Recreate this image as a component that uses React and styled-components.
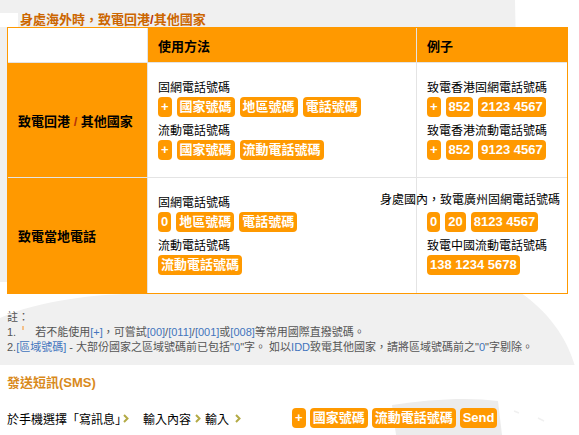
import React from 'react';
import styled, {createGlobalStyle} from 'styled-components';

const ORANGE = '#ff9900';
const GRID = '#e4e4e4';

const GlobalStyle = createGlobalStyle`
  html, body {
    margin: 0;
    padding: 0;
    background: #fff;
  }
  body {
    font-family: "Liberation Sans", "Noto Sans CJK TC", sans-serif;
    font-size: 12px;
    color: #000;
  }
`;

const Page = styled.div`
  position: relative;
  width: 579px;
  height: 435px;
  overflow: hidden;
`;

// decorative swooshes behind the page
const Backdrop = styled.svg`
  position: absolute;
  left: 0;
  top: 0;
  z-index: 0;
`;

const Content = styled.div`
  position: relative;
  z-index: 1;
  padding: 12px 0 0 7px;
`;

const Title = styled.h2`
  display: flex;
  align-items: center;
  margin: 0 0 0 -7px;
  height: 15px;
  font-size: 13px;
  line-height: 15px;
  font-weight: bold;
  color: #cc6600;
`;

const TitleMark = styled.span`
  width: 18px;
  height: 14px;
  margin-right: 2px;
  background: #fff;
`;

const Slash = styled.span`
  color: #b8330a;
`;

const Table = styled.div`
  display: grid;
  grid-template-columns: 139px 268px 150px;
  grid-template-rows: 34px 114px 115px;
  gap: 1px;
  width: max-content;
  background: ${GRID};
  border: 1px solid ${ORANGE};
`;

const Cell = styled.div`
  display: flex;
  flex-direction: column;
  justify-content: center;
  padding: 0 10px;
  background: ${p => (p.$accent ? ORANGE : '#fff')};
  font-size: ${p => (p.$strong ? '13px' : '12px')};
  font-weight: ${p => (p.$strong ? 'bold' : 'normal')};
  white-space: nowrap;
`;

const Group = styled.div`
  & + & {
    margin-top: 7px;
  }
`;

const Label = styled.div`
  line-height: 15px;
  white-space: nowrap;
  margin-left: ${p => p.$pull || 0}px;
  margin-top: ${p => (p.$lift ? -4 : 0)}px;
  margin-bottom: ${p => (p.$lift ? 4 : 0)}px;
`;

const Badges = styled.div`
  display: flex;
  gap: 5px;
  margin-top: 1px;
`;

const Badge = styled.span`
  display: inline-block;
  height: 20px;
  line-height: 20px;
  padding: 0 3px;
  border-radius: 4px;
  background: ${ORANGE};
  color: #fff;
  font-size: 13px;
  font-weight: bold;
  white-space: nowrap;
`;

const Notes = styled.div`
  margin-top: 16px;
  color: #555;
  font-size: 11px;
  line-height: 15px;
`;

const NoteLine = styled.div`
  white-space: nowrap;
`;

const Hl = styled.span`
  color: #4274bd;
`;

const Tick = styled.span`
  display: inline-block;
  width: 2px;
  height: 4px;
  margin: 0 11px 0 6px;
  background: #f4c08a;
  vertical-align: 6px;
`;

const SmsTitle = styled.h3`
  margin: 20px 0 0;
  font-size: 13px;
  line-height: 15px;
  font-weight: bold;
  color: #d98a1c;
`;

const Steps = styled.div`
  display: flex;
  align-items: center;
  height: 20px;
  margin-top: 18px;
  white-space: nowrap;
`;

const ChevronIcon = styled.svg`
  flex: none;
  margin: 0 ${p => p.$right}px 0 ${p => p.$left}px;
`;

const SmsBadges = styled.div`
  display: flex;
  gap: 4px;
  margin-left: ${p => p.$offset}px;
`;

const Chevron = ({left, right}) => (
  <ChevronIcon width="6" height="9" viewBox="0 0 6 9" $left={left} $right={right}>
    <path d="M1 1 L4.5 4.5 L1 8" fill="none" stroke="#b3aa45" strokeWidth="2" />
  </ChevronIcon>
);

const Background = () => (
  <Backdrop width="579" height="435" viewBox="0 0 579 435">
    <rect x="0" y="0" width="579" height="365" fill="#f0f0f0" />
    <path
      d="M515 0 L579 0 L579 366 L575 366 C566 336 548 312 521 293 C519 200 517 100 515 0 Z"
      fill="#fff"
    />
    <path d="M0 282 L150 282 L150 293 C95 294 40 300 0 318 Z" fill="#fff" />
    <path d="M392 405 C430 399 470 397 498 401 L502 435 L396 435 Z" fill="#ececec" />
    <path d="M514 411 L519 413 M538 418 L544 421" stroke="#f0f0f0" strokeWidth="1.5" />
  </Backdrop>
);

const rows = [
  {
    title: (
      <>
        致電回港 <Slash>/</Slash> 其他國家
      </>
    ),
    usage: [
      {label: '固網電話號碼', badges: ['+', '國家號碼', '地區號碼', '電話號碼']},
      {label: '流動電話號碼', badges: ['+', '國家號碼', '流動電話號碼']},
    ],
    examples: [
      {label: '致電香港固網電話號碼', badges: ['+', '852', '2123 4567']},
      {label: '致電香港流動電話號碼', badges: ['+', '852', '9123 4567']},
    ],
  },
  {
    title: '致電當地電話',
    usage: [
      {label: '固網電話號碼', badges: ['0', '地區號碼', '電話號碼']},
      {label: '流動電話號碼', badges: ['流動電話號碼']},
    ],
    examples: [
      {label: '身處國內，致電廣州固網電話號碼', badges: ['0', '20', '8123 4567'], pull: -47, lift: true},
      {label: '致電中國流動電話號碼', badges: ['138 1234 5678']},
    ],
  },
];

const Entries = ({items}) =>
  items.map(item => (
    <Group key={item.label}>
      <Label $pull={item.pull} $lift={item.lift}>
        {item.label}
      </Label>
      <Badges>
        {item.badges.map(b => (
          <Badge key={b}>{b}</Badge>
        ))}
      </Badges>
    </Group>
  ));

const App = () => (
  <Page>
    <GlobalStyle />
    <Background />
    <Content>
      <Title>
        <TitleMark />
        <span>
          身處海外時，致電回港<Slash>/</Slash>其他國家
        </span>
      </Title>

      <Table>
        <Cell />
        <Cell $accent $strong>使用方法</Cell>
        <Cell $accent $strong>例子</Cell>
        {rows.map((row, i) => (
          <React.Fragment key={i}>
            <Cell $accent $strong>
              <div>{row.title}</div>
            </Cell>
            <Cell>
              <Entries items={row.usage} />
            </Cell>
            <Cell>
              <Entries items={row.examples} />
            </Cell>
          </React.Fragment>
        ))}
      </Table>

      <Notes>
        <NoteLine>註：</NoteLine>
        <NoteLine>
          1.<Tick />
          若不能使用<Hl>[+]</Hl>，可嘗試<Hl>[00]</Hl>/<Hl>[011]</Hl>/<Hl>[001]</Hl>或
          <Hl>[008]</Hl>等常用國際直撥號碼。
        </NoteLine>
        <NoteLine>
          2.<Hl>[區域號碼]</Hl> - 大部份國家之區域號碼前已包括"<Hl>0</Hl>"字。 如以
          <Hl>IDD</Hl>致電其他國家，請將區域號碼前之"<Hl>0</Hl>"字剔除。
        </NoteLine>
      </Notes>

      <SmsTitle>發送短訊(SMS)</SmsTitle>

      <Steps>
        <span>於手機選擇「寫訊息」</span>
        <Chevron left={-4} right={14} />
        <span>輸入內容</span>
        <Chevron left={4} right={4} />
        <span>輸入</span>
        <Chevron left={6} right={0} />
        <SmsBadges $offset={51}>
          <Badge>+</Badge>
          <Badge>國家號碼</Badge>
          <Badge>流動電話號碼</Badge>
          <Badge>Send</Badge>
        </SmsBadges>
      </Steps>
    </Content>
  </Page>
);

export default App;
